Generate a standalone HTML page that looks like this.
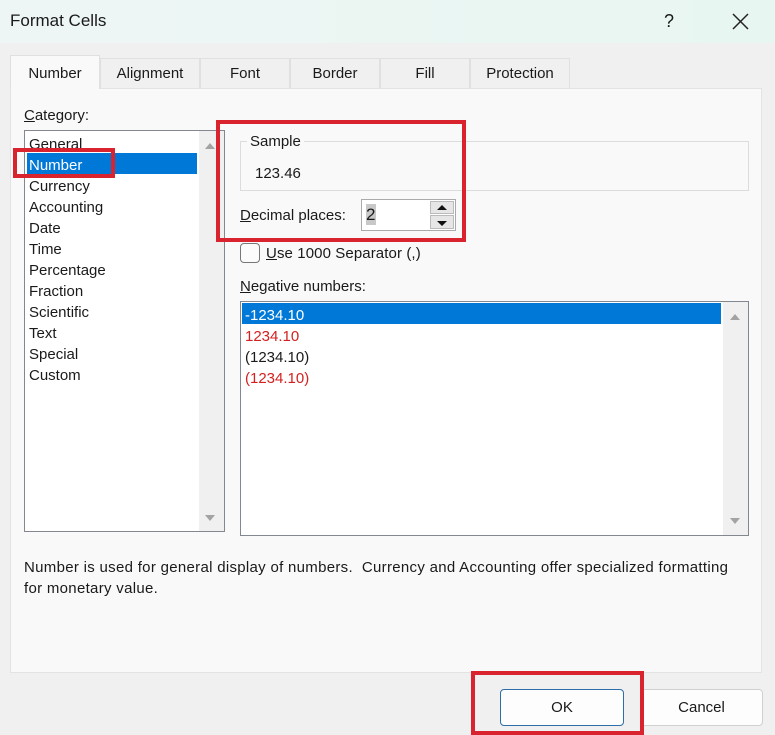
<!DOCTYPE html><html><head><style>
body{margin:0;width:775px;height:732px;overflow:hidden;background:#f0f0f0;font-family:"Liberation Sans",sans-serif;font-size:15px;color:#1a1a1a;position:relative}
.a{position:absolute}
.t{position:absolute;white-space:nowrap;line-height:18px}
.red{position:absolute;border:4px solid #d9232e;box-sizing:border-box}
.tab{position:absolute;top:58px;height:30px;border:1px solid #e0e0e0;border-bottom:none;box-sizing:border-box;text-align:center;line-height:30px;background:#f0f0f0}
</style></head><body>
<div class="a" style="left:0;top:0;width:775px;height:43px;background:linear-gradient(90deg,#eef6f5,#e8f6f1)"></div>
<div class="t" style="left:10px;top:12px;font-size:17px">Format Cells</div>
<div class="t" style="left:664px;top:12px;font-size:18px">?</div>
<svg class="a" style="left:732px;top:13px" width="17" height="17"><path d="M1 1L16 16M16 1L1 16" stroke="#222" stroke-width="1.5"/></svg>
<div class="a" style="left:10px;top:88px;width:752px;height:585px;background:#f9f9f9;border:1px solid #e3e3e3;box-sizing:border-box"></div>
<div class="tab" style="left:10px;width:90px;top:55px;height:34px;background:#f9f9f9;line-height:36px">Number</div>
<div class="tab" style="left:100px;width:100px">Alignment</div>
<div class="tab" style="left:200px;width:90px">Font</div>
<div class="tab" style="left:290px;width:90px">Border</div>
<div class="tab" style="left:380px;width:90px">Fill</div>
<div class="tab" style="left:470px;width:100px">Protection</div>
<div class="t" style="left:24px;top:107px"><u>C</u>ategory:</div>
<div class="a" style="left:24px;top:130px;width:201px;height:402px;background:#fff;border:1px solid #828790;box-sizing:border-box"></div>
<div class="a" style="left:199px;top:131px;width:25px;height:400px;background:#f0f0f0"></div>
<svg class="a" style="left:204px;top:142px" width="12" height="8"><path d="M1 7L6 1L11 7Z" fill="#a3a3a3"/></svg>
<svg class="a" style="left:204px;top:514px" width="12" height="8"><path d="M1 1L6 7L11 1Z" fill="#a3a3a3"/></svg>
<div class="a" style="left:27px;top:153px;width:170px;height:21px;background:#0078d7"></div>
<div class="t" style="left:29px;top:134px;line-height:21px">General<br><span style="color:#fff">Number</span><br>Currency<br>Accounting<br>Date<br>Time<br>Percentage<br>Fraction<br>Scientific<br>Text<br>Special<br>Custom</div>
<div class="a" style="left:240px;top:141px;width:509px;height:50px;border:1px solid #dcdcdc;box-sizing:border-box"></div>
<div class="t" style="left:247px;top:133px;background:#f9f9f9;padding:0 3px">Sample</div>
<div class="t" style="left:255px;top:165px">123.46</div>
<div class="t" style="left:240px;top:207px"><u>D</u>ecimal places:</div>
<div class="a" style="left:361px;top:199px;width:95px;height:32px;background:#fff;border:1px solid #aaa;box-sizing:border-box"></div>
<div class="a" style="left:366px;top:204px;width:10px;height:21px;background:#c8c8c8"></div>
<div class="t" style="left:366px;top:204px;font-size:17px;line-height:21px">2</div>
<div class="a" style="left:430px;top:201px;width:24px;height:13px;background:#e6e6e6;border:1px solid #bbb;box-sizing:border-box"></div>
<div class="a" style="left:430px;top:215px;width:24px;height:14px;background:#e6e6e6;border:1px solid #bbb;box-sizing:border-box"></div>
<svg class="a" style="left:436px;top:204px" width="12" height="24"><path d="M1 6L6 1L11 6Z M1 17L6 22L11 17Z" fill="#111"/></svg>
<div class="a" style="left:240px;top:243px;width:20px;height:20px;border:1px solid #777;border-radius:4px;background:#fbfbfb;box-sizing:border-box"></div>
<div class="t" style="left:266px;top:245px;letter-spacing:0.1px"><u>U</u>se 1000 Separator (,)</div>
<div class="t" style="left:240px;top:278px"><u>N</u>egative numbers:</div>
<div class="a" style="left:240px;top:301px;width:509px;height:235px;background:#fff;border:1px solid #828790;box-sizing:border-box"></div>
<div class="a" style="left:723px;top:302px;width:25px;height:233px;background:#f0f0f0"></div>
<svg class="a" style="left:729px;top:313px" width="12" height="8"><path d="M1 7L6 1L11 7Z" fill="#a3a3a3"/></svg>
<svg class="a" style="left:729px;top:517px" width="12" height="8"><path d="M1 1L6 7L11 1Z" fill="#a3a3a3"/></svg>
<div class="a" style="left:242px;top:303px;width:479px;height:21px;background:#0078d7"></div>
<div class="t" style="left:245px;top:305px;line-height:21px"><span style="color:#fff">-1234.10</span><br><span style="color:#d42020">1234.10</span><br>(1234.10)<br><span style="color:#d42020">(1234.10)</span></div>
<div class="t" style="left:24px;top:557px;line-height:21px;letter-spacing:0.3px">Number is used for general display of numbers.&nbsp; Currency and Accounting offer specialized formatting<br>for monetary value.</div>
<div class="a" style="left:500px;top:689px;width:124px;height:37px;background:#fdfdfd;border:1px solid #2e6ea8;border-radius:4px;box-sizing:border-box;text-align:center;line-height:35px">OK</div>
<div class="a" style="left:640px;top:689px;width:123px;height:37px;background:#fdfdfd;border:1px solid #d0d0d0;border-radius:4px;box-sizing:border-box;text-align:center;line-height:35px">Cancel</div>
<div class="red" style="left:216px;top:120px;width:250px;height:122px"></div>
<div class="red" style="left:13px;top:148px;width:102px;height:30px"></div>
<div class="red" style="left:471px;top:671px;width:173px;height:64px"></div>
</body></html>
